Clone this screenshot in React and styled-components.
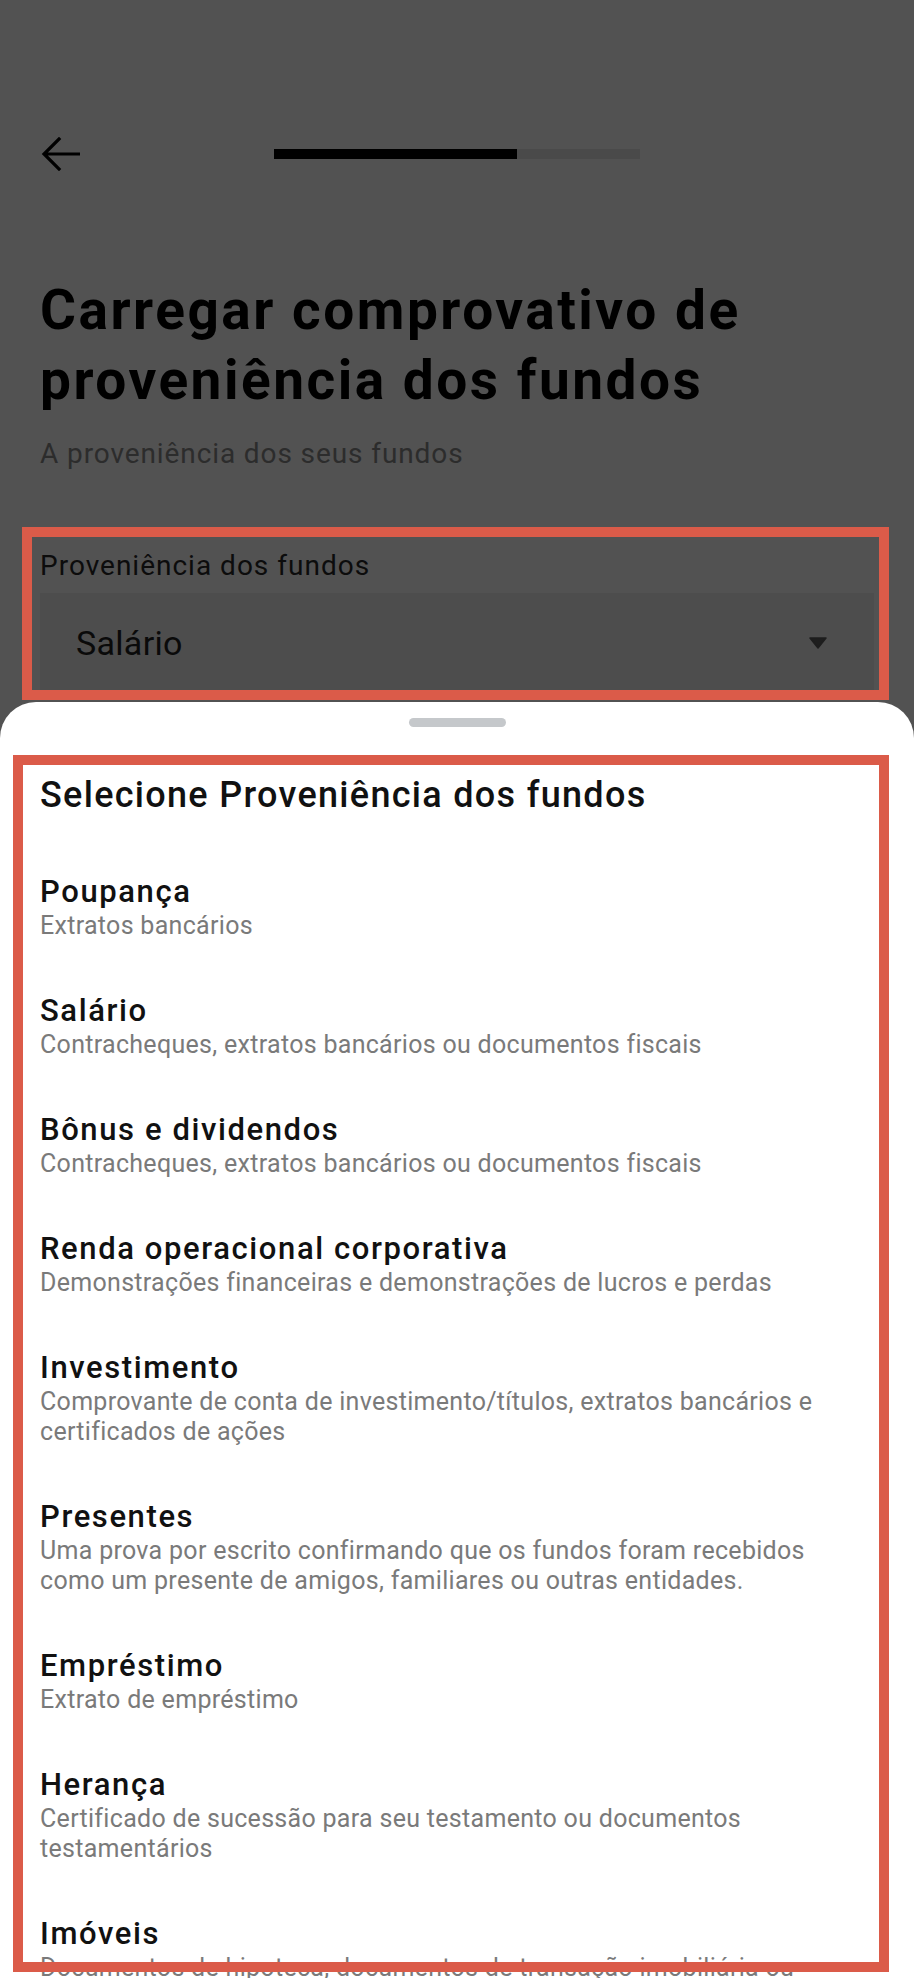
import React from "react";
import styled, { createGlobalStyle } from "styled-components";

const GlobalStyle = createGlobalStyle`
  html, body {
    margin: 0;
    padding: 0;
    background: #525252;
  }
  body {
    font-family: Roboto, "Noto Sans", "Liberation Sans", Arial, sans-serif;
    -webkit-font-smoothing: antialiased;
  }
  * { box-sizing: border-box; }
`;

const Screen = styled.div`
  width: 914px;
  height: 1978px;
  overflow: hidden;
  display: flex;
  flex-direction: column;
  background: #525252;
`;

/* Dimmed page that sits behind the bottom sheet */
const Backdrop = styled.div`
  flex-shrink: 0;
  display: flex;
  flex-direction: column;
  padding: 124px 40px 0;
`;

const Header = styled.div`
  display: grid;
  grid-template-columns: 1fr 366px 1fr;
  align-items: center;
  height: 60px;
`;

const BackButton = styled.button`
  width: 44px;
  height: 40px;
  padding: 0;
  border: 0;
  background: none;
  display: flex;
  align-items: center;
  justify-content: flex-start;
  cursor: pointer;
`;

const Progress = styled.div`
  height: 10px;
  background: #4a4a4a;
  display: flex;
`;

const ProgressFill = styled.div`
  height: 100%;
  background: #000;
`;

const Title = styled.h1`
  margin: 91px 0 0;
  font-size: 55px;
  line-height: 70px;
  font-weight: 700;
  color: #000;
  letter-spacing: 2.5px;
  white-space: nowrap;
`;

const Subtitle = styled.p`
  margin: 21px 0 0;
  font-size: 28px;
  line-height: 36px;
  letter-spacing: 0.9px;
  color: #2c2c2c;
`;

const FieldGroup = styled.div`
  position: relative;
  margin-top: 76px;
  display: flex;
  flex-direction: column;
`;

const FieldLabel = styled.label`
  font-size: 28px;
  line-height: 36px;
  letter-spacing: 1px;
  color: #0c0c0c;
`;

const SelectBox = styled.div`
  margin-top: 9px;
  height: 100px;
  background: #4d4d4d;
  display: flex;
  align-items: center;
  justify-content: space-between;
  padding: 0 47px 0 36px;
`;

const SelectValue = styled.span`
  font-size: 34px;
  line-height: 40px;
  letter-spacing: 0.3px;
  color: #0a0a0a;
`;

/* Highlight frame drawn over a region */
const Highlight = styled.div`
  position: absolute;
  top: ${(p) => p.$top}px;
  left: ${(p) => p.$left}px;
  right: ${(p) => p.$right}px;
  bottom: ${(p) => p.$bottom}px;
  border: 10px solid #db5b49;
  pointer-events: none;
  z-index: 2;
`;

const Sheet = styled.section`
  position: relative;
  flex: 1;
  margin-top: 9px;
  background: #fff;
  border-radius: 36px 36px 0 0;
  padding: 16px 40px 0;
  display: flex;
  flex-direction: column;
  overflow: hidden;

  & > * {
    flex-shrink: 0;
  }
`;

const Handle = styled.div`
  align-self: center;
  width: 97px;
  height: 9px;
  border-radius: 5px;
  background: #c5c8cb;
`;

const SheetTitle = styled.h2`
  margin: 47px 0 0;
  font-size: 36px;
  line-height: 42px;
  font-weight: 500;
  letter-spacing: 1.3px;
  color: #111;
`;

const OptionList = styled.ul`
  list-style: none;
  margin: 57px 0 0;
  padding: 0 40px 0 0;
  display: flex;
  flex-direction: column;
  gap: 51px;
`;

const Option = styled.li`
  display: flex;
  flex-direction: column;
`;

const OptionName = styled.span`
  font-size: 31px;
  line-height: 38px;
  font-weight: 500;
  letter-spacing: 1.6px;
  color: #111;
`;

const OptionHint = styled.span`
  font-size: 25px;
  line-height: 30px;
  letter-spacing: 0.3px;
  color: #7a7a7a;
`;

const ArrowLeft = () => (
  <svg width="40" height="34" viewBox="0 0 40 34" fill="none">
    <path
      d="M39 17H5M19 2L4 17l15 15"
      stroke="#000"
      strokeWidth="3.2"
      strokeLinecap="square"
    />
  </svg>
);

const Caret = () => (
  <svg width="18" height="12" viewBox="0 0 18 12">
    <path
      d="M1 1h16l-8 10z"
      fill="#1e1e1e"
      stroke="#1e1e1e"
      strokeWidth="1.5"
      strokeLinejoin="round"
    />
  </svg>
);

const options = [
  { name: "Poupança", hint: "Extratos bancários" },
  { name: "Salário", hint: "Contracheques, extratos bancários ou documentos fiscais" },
  { name: "Bônus e dividendos", hint: "Contracheques, extratos bancários ou documentos fiscais" },
  {
    name: "Renda operacional corporativa",
    hint: "Demonstrações financeiras e demonstrações de lucros e perdas",
  },
  {
    name: "Investimento",
    hint: "Comprovante de conta de investimento/títulos, extratos bancários e certificados de ações",
  },
  {
    name: "Presentes",
    hint: "Uma prova por escrito confirmando que os fundos foram recebidos como um presente de amigos, familiares ou outras entidades.",
  },
  { name: "Empréstimo", hint: "Extrato de empréstimo" },
  {
    name: "Herança",
    hint: "Certificado de sucessão para seu testamento ou documentos testamentários",
  },
  {
    name: "Imóveis",
    hint: "Documentos de hipoteca, documentos de transação imobiliária ou escrituras",
  },
];

export default function App() {
  const progress = 0.665;
  return (
    <>
      <GlobalStyle />
      <Screen>
        <Backdrop>
          <Header>
            <BackButton aria-label="Voltar">
              <ArrowLeft />
            </BackButton>
            <Progress>
              <ProgressFill style={{ width: `${progress * 100}%` }} />
            </Progress>
          </Header>
          <Title>
            Carregar comprovativo de
            <br />
            proveniência dos fundos
          </Title>
          <Subtitle>A proveniência dos seus fundos</Subtitle>
          <FieldGroup>
            <FieldLabel>Proveniência dos fundos</FieldLabel>
            <SelectBox>
              <SelectValue>Salário</SelectValue>
              <Caret />
            </SelectBox>
            <Highlight $top={-21} $left={-18} $right={-15} $bottom={-7} />
          </FieldGroup>
        </Backdrop>
        <Sheet>
          <Handle />
          <SheetTitle>Selecione Proveniência dos fundos</SheetTitle>
          <OptionList>
            {options.map((o) => (
              <Option key={o.name}>
                <OptionName>{o.name}</OptionName>
                <OptionHint>{o.hint}</OptionHint>
              </Option>
            ))}
          </OptionList>
          <Highlight $top={53} $left={13} $right={25} $bottom={6} />
        </Sheet>
      </Screen>
    </>
  );
}
